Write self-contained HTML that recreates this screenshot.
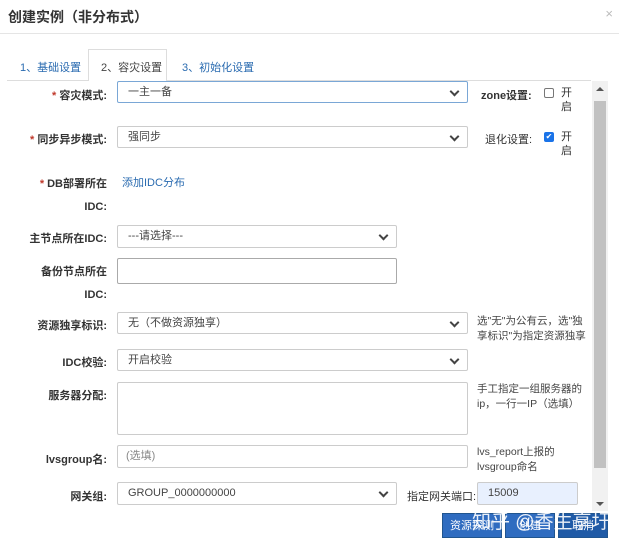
<!DOCTYPE html>
<html><head><meta charset="utf-8"><style>
*{margin:0;padding:0;box-sizing:border-box}
body{width:619px;height:549px;background:#fff;font-family:"Liberation Sans","Noto Sans CJK SC",sans-serif;font-size:11px;color:#333;position:relative;overflow:hidden}
.a{position:absolute}
.title{left:8px;top:7px;font-size:14px;font-weight:bold;color:#333}
.x{right:6px;top:6px;color:#bbb;font-size:13px}
.lab{position:absolute;right:512px;font-weight:bold;color:#333;white-space:nowrap}
.star{color:#c0392b;margin-right:3px}
.f{position:absolute;border:1px solid #ccc;border-radius:2px;background:#fff;padding-left:10px;line-height:21px;color:#444}
.sel::after{content:"";position:absolute;right:9px;top:6px;width:5px;height:5px;border-right:2px solid #444;border-bottom:2px solid #444;transform:rotate(45deg)}
.note{position:absolute;left:477px;line-height:15px;color:#444;font-size:10.5px}
.btn{position:absolute;top:513px;height:25px;background:#2f6cc0;color:#fff;border:1px solid #20558f;text-align:center;line-height:24px}
</style></head><body>
<div class="a title">创建实例（非分布式）</div>
<div class="a x">×</div>
<div class="a" style="left:0;top:33px;width:619px;height:1px;background:#e5e5e5"></div>
<div class="a" style="left:7px;top:80px;width:584px;height:1px;background:#ddd"></div>
<div class="a" style="left:88px;top:49px;width:79px;height:32px;border:1px solid #ddd;border-bottom:none;background:#fff"></div>
<div class="a" style="left:20px;top:59px;color:#2a6bb0">1、基础设置</div>
<div class="a" style="left:101px;top:59px;color:#444">2、容灾设置</div>
<div class="a" style="left:182px;top:59px;color:#2a6bb0">3、初始化设置</div>

<div class="lab" style="top:87px"><span class="star">*</span>容灾模式:</div>
<div class="f sel" style="left:117px;top:81px;width:351px;height:22px;border-color:#7aa7d6">一主一备</div>
<div class="a" style="left:481px;top:87px;font-weight:bold">zone设置:</div>
<div class="a" style="left:544px;top:88px;width:10px;height:10px;border:1px solid #777;border-radius:2px"></div>
<div class="a" style="left:561px;top:86px;line-height:14px">开<br>启</div>

<div class="lab" style="top:131px"><span class="star">*</span>同步异步模式:</div>
<div class="f sel" style="left:117px;top:126px;width:351px;height:22px">强同步</div>
<div class="a" style="left:485px;top:131px;color:#333">退化设置:</div>
<div class="a" style="left:544px;top:132px;width:10px;height:10px;background:#1a73e8;border-radius:2px;color:#fff;font-size:8px;line-height:10px;text-align:center">✔</div>
<div class="a" style="left:561px;top:130px;line-height:14px">开<br>启</div>

<div class="lab" style="top:175px"><span class="star">*</span>DB部署所在</div>
<div class="lab" style="top:201px">IDC:</div>
<div class="a" style="left:122px;top:174px;color:#2a6bb0">添加IDC分布</div>

<div class="lab" style="top:230px">主节点所在IDC:</div>
<div class="f sel" style="left:117px;top:225px;width:280px;height:23px">---请选择---</div>

<div class="lab" style="top:263px">备份节点所在</div>
<div class="f" style="left:117px;top:258px;width:280px;height:26px;border-color:#aaa"></div>
<div class="lab" style="top:289px">IDC:</div>

<div class="lab" style="top:317px">资源独享标识:</div>
<div class="f sel" style="left:117px;top:312px;width:351px;height:22px">无（不做资源独享）</div>
<div class="note" style="top:314px">选"无"为公有云，选"独<br>享标识"为指定资源独享</div>

<div class="lab" style="top:354px">IDC校验:</div>
<div class="f sel" style="left:117px;top:349px;width:351px;height:22px">开启校验</div>

<div class="lab" style="top:387px">服务器分配:</div>
<div class="f" style="left:117px;top:382px;width:351px;height:53px"></div>
<div class="note" style="top:382px">手工指定一组服务器的<br>ip，一行一IP（选填）</div>

<div class="lab" style="top:451px">lvsgroup名:</div>
<div class="f" style="left:117px;top:445px;width:351px;height:23px;padding-left:8px;color:#888">(选填)</div>
<div class="note" style="top:445px">lvs_report上报的<br>lvsgroup命名</div>

<div class="lab" style="top:488px">网关组:</div>
<div class="f sel" style="left:117px;top:482px;width:280px;height:23px">GROUP_0000000000</div>
<div class="a" style="left:407px;top:488px;color:#333">指定网关端口:</div>
<div class="f" style="left:477px;top:482px;width:101px;height:23px;background:#e8f0fe">15009</div>

<div class="a" style="left:592px;top:81px;width:16px;height:430px;background:#f1f1f1"></div>
<div class="a" style="left:594px;top:101px;width:12px;height:367px;background:#c1c1c1"></div>
<div class="a" style="left:596px;top:87px;width:0;height:0;border:4px solid transparent;border-bottom-color:#555;border-top:none"></div>
<div class="a" style="left:596px;top:502px;width:0;height:0;border:4px solid transparent;border-top-color:#555;border-bottom:none"></div>

<div class="btn" style="left:442px;width:60px">资源探测</div>
<div class="btn" style="left:505px;width:50px">创建</div>
<div class="btn" style="left:558px;width:50px;background:#1f5aa6">取消</div>
<div class="a" style="left:472px;top:507px;font-size:19px;color:rgba(255,255,255,.9)">知乎 @香生享圩</div>
</body></html>
